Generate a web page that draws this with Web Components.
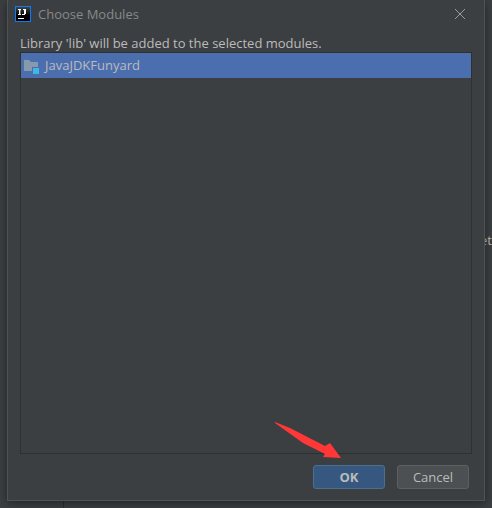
<!DOCTYPE html>
<html lang="en">
<head>
<meta charset="utf-8">
<title>Choose Modules</title>
<style>
html, body { height: 100%; }
body { margin: 0; overflow: hidden; background: #3c3f41; color: #bbbbbb; font: 13px/18px "Open Sans", "Noto Sans", sans-serif; }
</style>
</head>
<body>
<ide-desktop>
  <editor-backdrop slot="backdrop">et</editor-backdrop>
  <module-dialog>
    <title-bar slot="title">Choose Modules</title-bar>
    <span slot="message">Library 'lib' will be added to the selected modules.</span>
    <module-list>
      <module-row>JavaJDKFunyard</module-row>
    </module-list>
    <dialog-button slot="actions" primary>OK</dialog-button>
    <dialog-button slot="actions">Cancel</dialog-button>
  </module-dialog>
  <pointer-arrow slot="overlay"></pointer-arrow>
</ide-desktop>
<script>
function define(name, html) {
  const template = document.createElement('template');
  template.innerHTML = html;
  customElements.define(name, class extends HTMLElement {
    constructor() {
      super();
      this.attachShadow({ mode: 'open' }).append(template.content.cloneNode(true));
    }
  });
}

define('ide-desktop', `
  <style>
    :host { display: grid; position: relative; height: 100%; box-sizing: border-box; padding: 0 7px 7px; }
  </style>
  <slot name="backdrop"></slot><slot></slot><slot name="overlay"></slot>`);

define('editor-backdrop', `
  <style>
    :host { position: absolute; inset: 0; display: flex; align-items: center; justify-content: flex-end; box-sizing: border-box; padding-bottom: 28px; overflow: hidden; }
    i { position: absolute; left: 63px; bottom: 0; width: 1px; height: 24px; background: #2c2e2f; }
  </style>
  <slot></slot><i></i>`);

define('module-dialog', `
  <style>
    :host { display: flex; flex-direction: column; position: relative; min-height: 0; box-sizing: border-box; border: 1px solid #505354; border-top: 0; background: #3c3f41; box-shadow: 0 2px 9px rgba(0,0,0,.45); }
    main { flex: 1; display: flex; flex-direction: column; min-height: 0; padding: 7px 12px 0; }
    footer { display: flex; justify-content: flex-end; gap: 12px; padding: 11px 15px; }
  </style>
  <slot name="title"></slot>
  <main><slot name="message"></slot><slot></slot></main>
  <footer><slot name="actions"></slot></footer>`);

define('title-bar', `
  <style>
    :host { display: flex; align-items: center; height: 27px; padding: 0 17px 0 7px; color: #878889; }
    span { flex: 1; padding-left: 7px; }
    svg { display: block; }
    button { padding: 0; border: 0; background: none; color: #9a9c9d; }
  </style>
  <svg width="16" height="16" viewBox="0 0 16 16" aria-hidden="true">
    <defs><linearGradient id="g" x2="0" y2="1"><stop stop-color="#444"/><stop offset=".6"/></linearGradient></defs>
    <path fill="#087cfa" d="M0 0h16v16H0z"/><path fill="url(#g)" d="M1 1h14v14H1z"/>
    <path fill="#fff" d="M3 3h3v1H5v4h1v1H3V8h1V4H3zM8 3h3v5h-1v1H7V8h2V4H8zM3 12h6v1H3z"/>
    <path fill="#fff" opacity=".4" d="M5 4h1v4H5z"/>
  </svg>
  <span><slot></slot></span>
  <button type="button" aria-label="Close"><svg width="14" height="14" viewBox="0 0 14 14"><path fill="none" stroke="currentColor" d="m2 2 10 10M12 2 2 12"/></svg></button>`);

define('module-list', `
  <style>
    :host { display: block; flex: 1; min-height: 0; border: 1px solid #2e3031; }
  </style>
  <div role="listbox" aria-label="Modules"><slot></slot></div>`);

define('module-row', `
  <style>
    div { display: flex; gap: 5px; padding: 3px 3px 4px; background: #4b6eaf; }
  </style>
  <div role="option" aria-selected="true">
    <svg width="16" height="18" viewBox="0 0 16 18" aria-hidden="true">
      <path fill="#8799ad" d="M0 4h5l2 2h7v5H8v4H0z"/><path fill="#40b6e0" d="M9 12h6v6H9z"/>
    </svg>
    <slot></slot>
  </div>`);

define('dialog-button', `
  <style>
    :host { display: block; }
    button { display: block; min-width: 72px; height: 24px; padding: 0 8px; border: 1px solid #5e6060; border-radius: 3px; background: #4c5052; color: #bbbbbb; font: inherit; }
    :host([primary]) button { border-color: #4c708c; background: #365880; font-weight: 700; }
  </style>
  <button type="button"><slot></slot></button>`);

define('pointer-arrow', `
  <style>
    :host { position: absolute; right: 150px; bottom: 49px; pointer-events: none; }
    svg { display: block; }
  </style>
  <svg width="68" height="38" viewBox="0 0 68 38" aria-hidden="true"><path fill="#ff3837" d="M1 1 16 7 51 25l5-3 11 15-18-1 2-3L29 22 1 2z"/></svg>`);
</script>
</body>
</html>
